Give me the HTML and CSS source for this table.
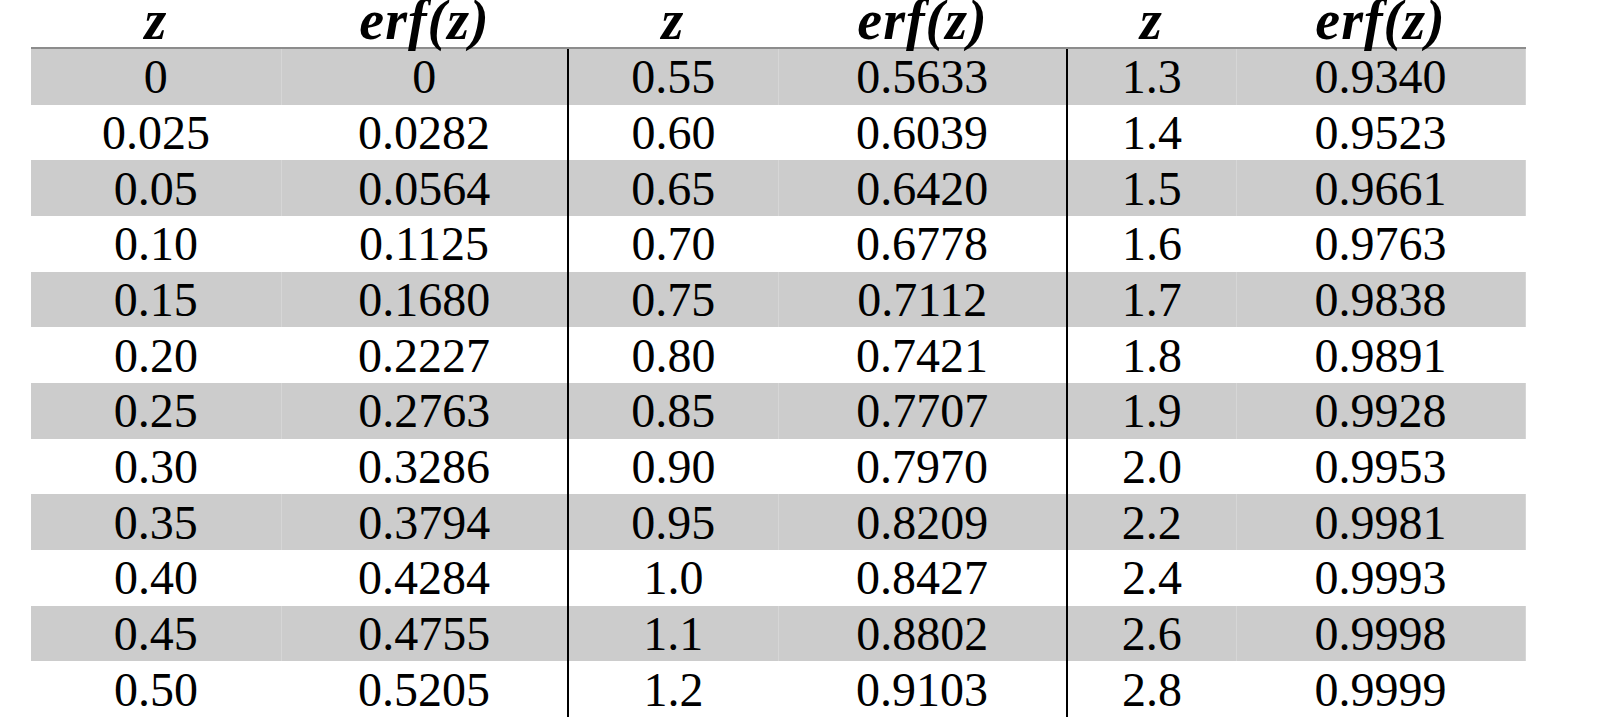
FILE: index.html
```html
<!DOCTYPE html>
<html>
<head>
<meta charset="utf-8">
<link rel="stylesheet" href="styles.css">
</head>
<body>
<table class="erf">
  <colgroup>
    <col class="c1"><col class="c2"><col class="c3"><col class="c4"><col class="c5"><col class="c6">
  </colgroup>
  <thead>
    <tr class="head">
      <th>z</th><th>erf(z)</th><th>z</th><th>erf(z)</th><th>z</th><th>erf(z)</th>
    </tr>
  </thead>
  <tbody>
    <tr class="shade"><td>0</td><td>0</td><td class="sep">0.55</td><td>0.5633</td><td class="sep">1.3</td><td>0.9340</td></tr>
    <tr><td>0.025</td><td>0.0282</td><td class="sep">0.60</td><td>0.6039</td><td class="sep">1.4</td><td>0.9523</td></tr>
    <tr class="shade"><td>0.05</td><td>0.0564</td><td class="sep">0.65</td><td>0.6420</td><td class="sep">1.5</td><td>0.9661</td></tr>
    <tr><td>0.10</td><td>0.1125</td><td class="sep">0.70</td><td>0.6778</td><td class="sep">1.6</td><td>0.9763</td></tr>
    <tr class="shade"><td>0.15</td><td>0.1680</td><td class="sep">0.75</td><td>0.7112</td><td class="sep">1.7</td><td>0.9838</td></tr>
    <tr><td>0.20</td><td>0.2227</td><td class="sep">0.80</td><td>0.7421</td><td class="sep">1.8</td><td>0.9891</td></tr>
    <tr class="shade"><td>0.25</td><td>0.2763</td><td class="sep">0.85</td><td>0.7707</td><td class="sep">1.9</td><td>0.9928</td></tr>
    <tr><td>0.30</td><td>0.3286</td><td class="sep">0.90</td><td>0.7970</td><td class="sep">2.0</td><td>0.9953</td></tr>
    <tr class="shade"><td>0.35</td><td>0.3794</td><td class="sep">0.95</td><td>0.8209</td><td class="sep">2.2</td><td>0.9981</td></tr>
    <tr><td>0.40</td><td>0.4284</td><td class="sep">1.0</td><td>0.8427</td><td class="sep">2.4</td><td>0.9993</td></tr>
    <tr class="shade"><td>0.45</td><td>0.4755</td><td class="sep">1.1</td><td>0.8802</td><td class="sep">2.6</td><td>0.9998</td></tr>
    <tr><td>0.50</td><td>0.5205</td><td class="sep">1.2</td><td>0.9103</td><td class="sep">2.8</td><td>0.9999</td></tr>
  </tbody>
</table>
</body>
</html>
```

FILE: styles.css
```css
html, body {
  margin: 0;
  padding: 0;
  background: #ffffff;
}

body {
  padding-left: 31px;
  font-family: "Liberation Serif", "Times New Roman", serif;
  color: #000000;
}

.erf {
  border-collapse: collapse;
  table-layout: fixed;
  width: 1494px;
}

.c1 { width: 250px; }
.c2 { width: 287px; }
.c3 { width: 210px; }
.c4 { width: 289px; }
.c5 { width: 169px; }
.c6 { width: 289px; }

.head th {
  height: 47px;
  padding: 0;
  font-family: "Liberation Serif", "Times New Roman", serif;
  font-size: 56px;
  font-weight: bold;
  font-style: italic;
  letter-spacing: 1px;
  line-height: 40px;
  text-align: center;
  vertical-align: top;
  border-bottom: 2px solid #8c8c8c;
}

.erf td {
  height: 55.67px;
  padding: 0;
  font-size: 48px;
  line-height: 55px;
  text-align: center;
  vertical-align: middle;
}

.erf tr.shade td {
  background: #cccccc;
  border-right: 1px solid #d6d6d6;
}

.erf td.sep {
  border-left: 2px solid #000000;
}
```
